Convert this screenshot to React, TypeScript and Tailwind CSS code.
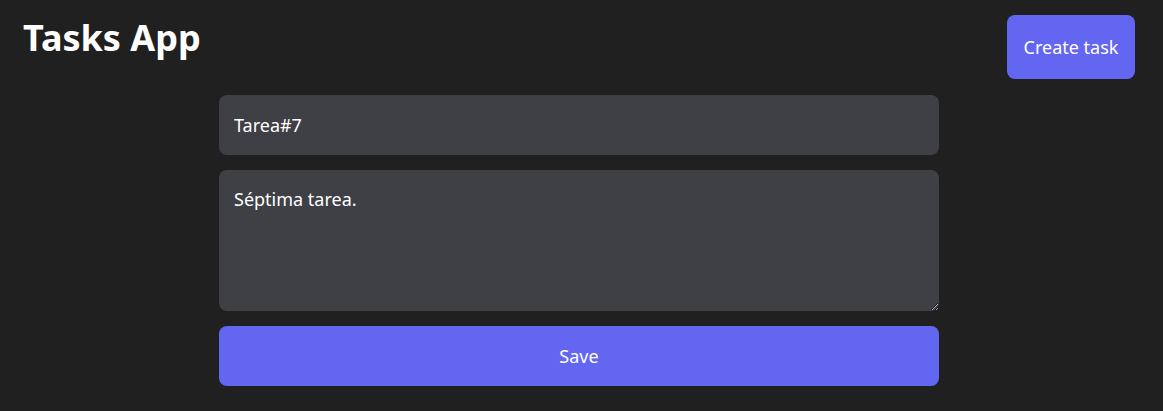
import React from "react";

export default function App() {
  return (
    <div className="min-h-screen bg-[#202020] text-white font-['Noto_Sans',sans-serif]">
      <header className="flex justify-between items-start pl-[23px] pr-[28px] pt-[15px]">
        <h1 className="text-[36px] leading-[40px] font-bold mt-[3px]">Tasks App</h1>
        <button className="h-[64px] w-[128px] rounded-lg bg-[#6366f1] text-[18px]">Create task</button>
      </header>
      <form className="w-[720px] ml-[219px] mt-4 flex flex-col gap-[15px]">
        <input
          defaultValue="Tarea#7"
          className="h-[60px] rounded-lg bg-[#3f3f46] px-[15px] text-[18px] text-white outline-none"
        />
        <textarea
          defaultValue="Séptima tarea."
          className="h-[141px] rounded-lg bg-[#3f3f46] px-[15px] py-[15px] text-[18px] leading-[28px] text-white outline-none [color-scheme:dark]"
        />
        <button type="button" className="h-[60px] rounded-lg bg-[#6366f1] text-[18px]">Save</button>
      </form>
    </div>
  );
}
